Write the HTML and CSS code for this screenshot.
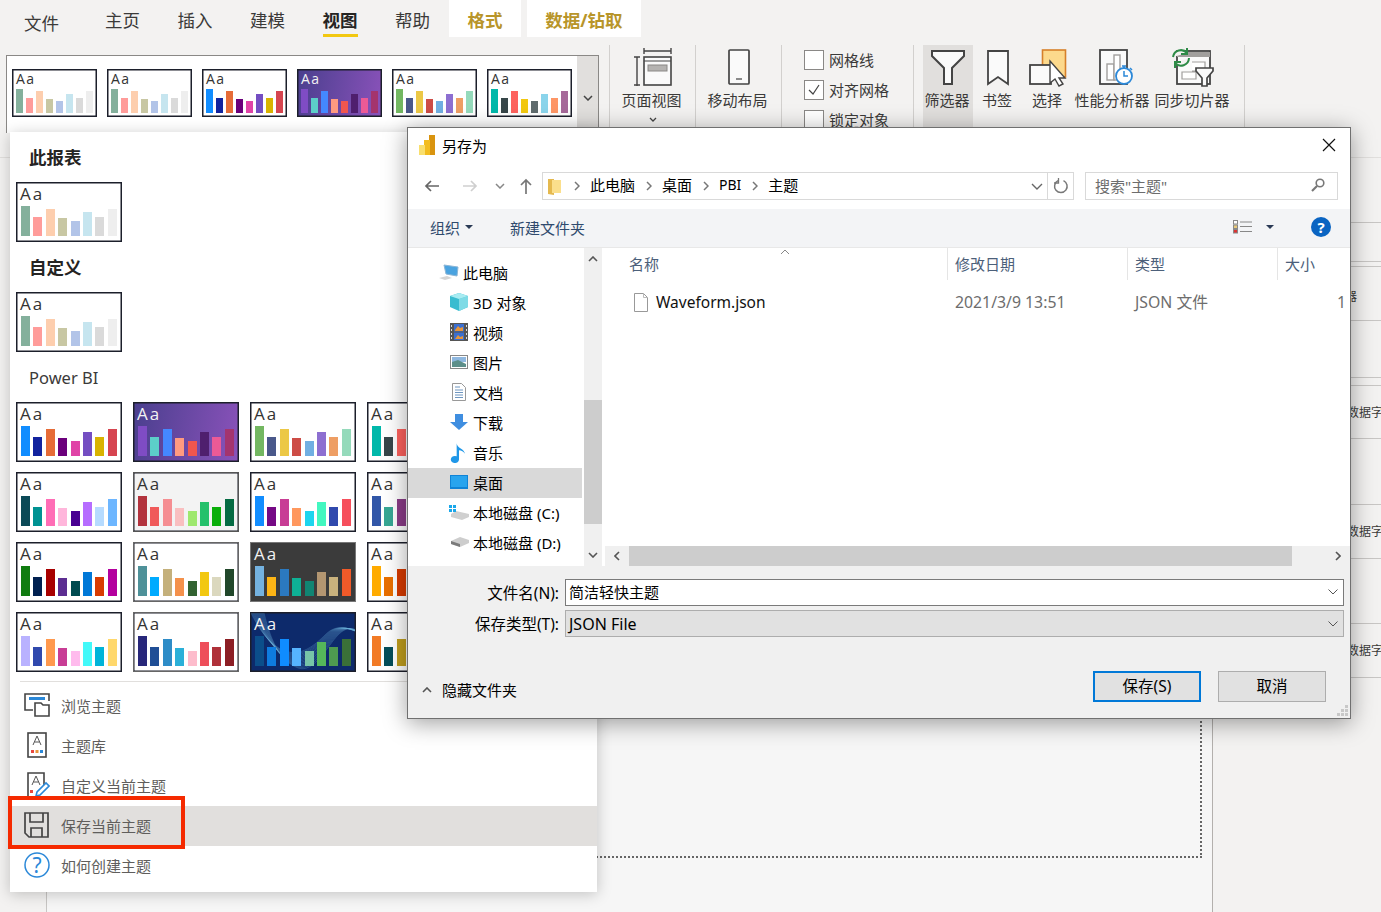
FILE: index.html
```html
<!DOCTYPE html>
<html lang="zh-CN">
<head>
    <meta charset="UTF-8">
    <title>Power BI 另存为主题</title>
    <link rel="stylesheet" href="styles.css">
</head>
<body>
    <!-- Ribbon -->
    <header class="ribbon">
        <nav class="tabs">
            <span class="tab tab-file">文件</span>
            <span class="tab">主页</span>
            <span class="tab">插入</span>
            <span class="tab">建模</span>
            <span class="tab tab-active">视图</span>
            <span class="tab">帮助</span>
            <span class="tab-context tab-format">格式</span>
            <span class="tab-context tab-data">数据/钻取</span>
        </nav>

        <div class="tools">
            <div class="gallery">
                <div id="ribbonThemes" class="gallery-items"></div>
                <div class="gallery-more">
                    <svg width="10" height="6" viewBox="0 0 10 6"><path d="M1 1l4 4 4-4" fill="none" stroke="#444" stroke-width="1.5"/></svg>
                </div>
            </div>

            <div class="group group-page">
                <button class="tool">
                    <svg class="tool-icon" width="38" height="38" viewBox="0 0 38 38">
                        <path d="M10 3h27M10 0v6M37 0v6M3 9v29M0 9h6M0 37h6" fill="none" stroke="#444" stroke-width="1.4"/>
                        <rect x="10" y="9" width="27" height="28" fill="#fafafa" stroke="#444" stroke-width="1.6"/>
                        <path d="M10 13h27" stroke="#444"/>
                        <rect x="14" y="17" width="19" height="6" fill="#b5b3b1" stroke="#8a8886"/>
                    </svg>
                    <span class="tool-label">页面视图</span>
                    <svg class="tool-caret" width="8" height="5" viewBox="0 0 8 5"><path d="M1 1l3 3 3-3" fill="none" stroke="#444" stroke-width="1.3"/></svg>
                </button>
            </div>

            <div class="group group-mobile">
                <button class="tool">
                    <svg class="tool-icon" width="22" height="38" viewBox="0 0 22 38">
                        <rect x="1" y="2" width="20" height="34" rx="1" fill="#fafafa" stroke="#444" stroke-width="1.7"/>
                        <path d="M8 31h6" stroke="#666" stroke-width="1.5"/>
                    </svg>
                    <span class="tool-label">移动布局</span>
                </button>
            </div>

            <div class="group group-checks">
                <label class="check"><span class="check-box"></span>网格线</label>
                <label class="check"><span class="check-box"><svg width="18" height="18" viewBox="0 0 18 18"><path d="M4 9l4 4 6-9" fill="none" stroke="#444" stroke-width="1.2"/></svg></span>对齐网格</label>
                <label class="check"><span class="check-box"></span>锁定对象</label>
            </div>

            <div class="group group-panes">
                <button class="tool tool-on pane-narrow">
                    <svg class="tool-icon" width="34" height="38" viewBox="0 0 34 38">
                        <path d="M1 3h32v5L21 20v16h-8V20L1 8z" fill="#fafafa" stroke="#444" stroke-width="2"/>
                    </svg>
                    <span class="tool-label">筛选器</span>
                </button>
                <button class="tool pane-narrow">
                    <svg class="tool-icon" width="22" height="38" viewBox="0 0 22 38">
                        <path d="M1 3h20v33l-10-7-10 7z" fill="#fafafa" stroke="#444" stroke-width="1.8"/>
                    </svg>
                    <span class="tool-label">书签</span>
                </button>
                <button class="tool pane-narrow">
                    <svg class="tool-icon" width="38" height="38" viewBox="0 0 38 38">
                        <rect x="13.5" y="2" width="23" height="27" fill="#fcd98c" stroke="#d6802a" stroke-width="1.6"/>
                        <rect x="1" y="17" width="21" height="19" fill="#fafafa" stroke="#444" stroke-width="1.8"/>
                        <path d="M21 13l15 17h-6l4 6-4 2-4-7-5 4z" fill="#fff" stroke="#444" stroke-width="1.4"/>
                    </svg>
                    <span class="tool-label">选择</span>
                </button>
                <button class="tool pane-wide">
                    <svg class="tool-icon tool-icon-perf" width="36" height="40" viewBox="0 0 36 40">
                        <rect x="1" y="3" width="27" height="34" fill="#fafafa" stroke="#444" stroke-width="1.8"/>
                        <rect x="8" y="17" width="7" height="16" fill="#fff" stroke="#a19f9d" stroke-width="1.4"/>
                        <rect x="15" y="8" width="6" height="25" fill="#fff" stroke="#a19f9d" stroke-width="1.4"/>
                        <circle cx="25" cy="29" r="8" fill="#fff" stroke="#2b88d8" stroke-width="1.8"/>
                        <path d="M25 24v5h4M23 19h4M25 19v2M31 21l2 2" fill="none" stroke="#2b88d8" stroke-width="1.5"/>
                    </svg>
                    <span class="tool-label">性能分析器</span>
                </button>
                <button class="tool pane-wide">
                    <svg class="tool-icon" width="42" height="40" viewBox="0 0 42 40">
                        <rect x="5" y="4" width="33" height="33" fill="#fafafa" stroke="#444" stroke-width="1.8"/>
                        <rect x="5" y="5" width="33" height="5" fill="#a19f9d"/>
                        <path d="M20 15h13v9H20M10 25h14v7H10z" fill="#fff" stroke="#a19f9d" stroke-width="1.2"/>
                        <path d="M1 10a8 8 0 0 1 14-4M17 11a8 8 0 0 1-14 5" fill="#f3f2f1" stroke="#2e8b47" stroke-width="2"/>
                        <path d="M15 1v6h-6M3 21v-6h6" fill="none" stroke="#2e8b47" stroke-width="2"/>
                        <path d="M24 21h17v3l-6 7v8h-5v-8l-6-7z" fill="#fafafa" stroke="#444" stroke-width="1.7"/>
                    </svg>
                    <span class="tool-label">同步切片器</span>
                </button>
            </div>
        </div>
    </header>

    <!-- Report canvas behind the menus -->
    <main class="workspace">
        <div class="rail"></div>
        <div class="canvas"><div class="page-frame"></div></div>
        <aside class="panel">
            <div class="panel-row panel-h65"></div>
            <div class="panel-row panel-h39"></div>
            <div class="panel-row panel-h5"></div>
            <div class="panel-row panel-h54 panel-slicer">器</div>
            <div class="panel-row panel-h57"></div>
            <div class="panel-row panel-h8"></div>
            <div class="panel-row panel-h53 panel-field">数据字</div>
            <div class="panel-row panel-h66"></div>
            <div class="panel-row panel-h54 panel-field">数据字</div>
            <div class="panel-row panel-h65"></div>
            <div class="panel-row panel-h54 panel-field">数据字</div>
        </aside>
    </main>

    <!-- Themes dropdown -->
    <div class="theme-menu">
        <h2 class="menu-title menu-title-bold">此报表</h2>
        <div id="reportTheme" class="theme-grid"></div>
        <h2 class="menu-title menu-title-bold">自定义</h2>
        <div id="customTheme" class="theme-grid"></div>
        <h2 class="menu-title menu-title-latin">Power BI</h2>
        <div id="builtinThemes" class="theme-grid"></div>

        <ul class="menu-list">
            <li class="menu-item">
                <svg class="menu-icon" width="26" height="24" viewBox="0 0 26 24">
                    <path d="M9 17H1V1h24v7" fill="none" stroke="#444" stroke-width="1.6"/>
                    <rect x="5" y="4" width="16" height="3" fill="#2b88d8"/>
                    <path d="M11 10h6l2 2h6v11H11z" fill="#fff" stroke="#444" stroke-width="1.6"/>
                </svg>
                浏览主题
            </li>
            <li class="menu-item">
                <svg class="menu-icon" width="26" height="26" viewBox="0 0 26 26">
                    <rect x="4" y="1" width="18" height="24" fill="#fff" stroke="#444" stroke-width="1.6"/>
                    <path d="M9 13l4-9 4 9M10.5 10h5" fill="none" stroke="#555" stroke-width="1"/>
                    <rect x="7" y="18" width="3" height="3" fill="#e8483f"/>
                    <rect x="11.5" y="18" width="3" height="3" fill="#e8943a"/>
                    <rect x="16" y="18" width="3" height="3" fill="#2b88d8"/>
                </svg>
                主题库
            </li>
            <li class="menu-item">
                <svg class="menu-icon" width="26" height="26" viewBox="0 0 26 26">
                    <path d="M14 25H4V1h16v12" fill="#fff" stroke="#444" stroke-width="1.6"/>
                    <path d="M8 13l4-9 4 9M9.5 10h5" fill="none" stroke="#555" stroke-width="1"/>
                    <rect x="6" y="18" width="3" height="3" fill="#e8483f"/>
                    <path d="M12 24l1-4 9-9 3 3-9 9z" fill="#fff" stroke="#2b88d8" stroke-width="1.6"/>
                </svg>
                自定义当前主题
            </li>
            <li class="menu-item menu-item-on">
                <svg class="menu-icon" width="26" height="26" viewBox="0 0 26 26">
                    <path d="M1 1h23v24H5l-4-4z" fill="none" stroke="#444" stroke-width="1.7"/>
                    <path d="M6 1v9h13V1M7 25v-9h11v9" fill="none" stroke="#444" stroke-width="1.7"/>
                </svg>
                保存当前主题
            </li>
            <li class="menu-item">
                <svg class="menu-icon" width="26" height="26" viewBox="0 0 26 26">
                    <circle cx="13" cy="13" r="12" fill="#fff" stroke="#2b88d8" stroke-width="1.5"/>
                    <text class="menu-help" x="13" y="20.500" text-anchor="middle">?</text>
                </svg>
                如何创建主题
            </li>
        </ul>
    </div>

    <div class="callout"></div>

    <!-- Save as dialog -->
    <section class="dialog">
        <div class="dlg-title">
            <svg width="16" height="20" viewBox="0 0 16 20">
                <rect x="10" y="0" width="6" height="20" fill="#d9940f"/>
                <rect x="5" y="5" width="6" height="15" fill="#f2bc1f"/>
                <rect x="0" y="10" width="6" height="10" fill="#f9df6e"/>
            </svg>
            <span>另存为</span>
            <svg class="dlg-close" width="14" height="14" viewBox="0 0 14 14"><path d="M1 1l12 12M13 1L1 13" stroke="#111" stroke-width="1.2"/></svg>
        </div>

        <div class="dlg-address">
            <span class="nav-btn nav-back"><svg width="16" height="12" viewBox="0 0 16 12"><path d="M15 6H2M7 1L2 6l5 5" fill="none" stroke="#666" stroke-width="1.7"/></svg></span>
            <span class="nav-btn nav-fwd"><svg width="16" height="12" viewBox="0 0 16 12"><path d="M1 6h13M9 1l5 5-5 5" fill="none" stroke="#cfcfcf" stroke-width="1.7"/></svg></span>
            <span class="nav-btn nav-hist"><svg width="10" height="6" viewBox="0 0 10 6"><path d="M1 1l4 4 4-4" fill="none" stroke="#888" stroke-width="1.5"/></svg></span>
            <span class="nav-btn nav-up"><svg width="12" height="16" viewBox="0 0 12 16"><path d="M6 16V2M1 7l5-5 5 5" fill="none" stroke="#777" stroke-width="1.7"/></svg></span>

            <div class="crumbs">
                <svg class="crumb-folder" width="13" height="17" viewBox="0 0 13 17">
                    <path d="M0 1h6v16l-6-1z" fill="#e5b94e"/>
                    <path d="M4 2h9v13H4z" fill="#fbdf8c"/>
                </svg>
                <span class="crumb-sep"><svg width="6" height="10" viewBox="0 0 6 10"><path d="M1 1l4 4-4 4" fill="none" stroke="#777" stroke-width="1.5"/></svg></span>
                <span class="crumb-text">此电脑</span>
                <span class="crumb-sep"><svg width="6" height="10" viewBox="0 0 6 10"><path d="M1 1l4 4-4 4" fill="none" stroke="#777" stroke-width="1.5"/></svg></span>
                <span class="crumb-text">桌面</span>
                <span class="crumb-sep"><svg width="6" height="10" viewBox="0 0 6 10"><path d="M1 1l4 4-4 4" fill="none" stroke="#777" stroke-width="1.5"/></svg></span>
                <span class="crumb-text crumb-latin">PBI</span>
                <span class="crumb-sep"><svg width="6" height="10" viewBox="0 0 6 10"><path d="M1 1l4 4-4 4" fill="none" stroke="#777" stroke-width="1.5"/></svg></span>
                <span class="crumb-text">主题</span>
                <svg class="crumb-drop" width="12" height="7" viewBox="0 0 12 7"><path d="M1 1l5 5 5-5" fill="none" stroke="#666" stroke-width="1.4"/></svg>
                <span class="crumb-refresh">
                    <svg width="16" height="16" viewBox="0 0 16 16"><path d="M10.5 2.6A6.3 6.3 0 1 1 5 2.7" fill="none" stroke="#777" stroke-width="1.5"/><path d="M5.5 0v5H1" fill="none" stroke="#777" stroke-width="1.3"/></svg>
                </span>
            </div>

            <div class="search">
                <span>搜索"主题"</span>
                <svg width="14" height="14" viewBox="0 0 14 14"><circle cx="9" cy="5" r="3.8" fill="none" stroke="#777" stroke-width="1.6"/><path d="M6 8l-5 5" stroke="#777" stroke-width="2.2"/></svg>
            </div>
        </div>

        <div class="dlg-toolbar">
            <span class="toolbar-btn">组织<i class="caret"></i></span>
            <span class="toolbar-btn toolbar-new">新建文件夹</span>
            <svg class="toolbar-view" width="19" height="14" viewBox="0 0 19 14">
                <rect x=".5" y=".5" width="4" height="3.5" fill="#fff" stroke="#888"/>
                <rect x=".5" y="5" width="4" height="3.5" fill="#e8c97a" stroke="#888"/>
                <rect x=".5" y="9.5" width="4" height="3.5" fill="#d33" stroke="#888"/>
                <path d="M7 2h12M7 6.500h12M7 11.500h12" stroke="#888"/>
            </svg>
            <i class="caret toolbar-caret"></i>
            <span class="help-dot">?</span>
        </div>

        <div class="dlg-body">
            <ul class="tree">
                <li class="tree-item tree-root">
                    <svg width="20" height="16" viewBox="0 0 20 16"><path d="M5 1l14 2-1 9-11-2z" fill="#4aa3e0" stroke="#8db6d6"/><path d="M0 14l8-2 5 2-7 2z" fill="#d5d5d5"/></svg>
                    此电脑
                </li>
                <li class="tree-item">
                    <svg width="18" height="18" viewBox="0 0 18 18"><path d="M9 0l9 3v11l-9 4-9-4V3z" fill="#39bcd0"/><path d="M9 6l9-3v11l-9 4z" fill="#7fdbe6"/><path d="M0 3l9-3 9 3-9 3z" fill="#a8ecf2"/></svg>
                    3D 对象
                </li>
                <li class="tree-item">
                    <svg width="18" height="18" viewBox="0 0 18 18"><rect width="18" height="18" fill="#555"/><rect x="4" y="1" width="10" height="7.500" fill="#3b6fd0"/><rect x="4" y="9.500" width="10" height="7.500" fill="#3b6fd0"/><path d="M5 7l3-4 2 2 3-1v4H5zM5 16l3-4 2 2 3-1v3z" fill="#e8963a"/><path d="M1.500 2v14M16.500 2v14" stroke="#ddd" stroke-dasharray="2 2"/></svg>
                    视频
                </li>
                <li class="tree-item">
                    <svg width="18" height="14" viewBox="0 0 18 14"><rect x=".5" y=".5" width="17" height="13" fill="#fff" stroke="#888"/><rect x="2" y="2" width="14" height="5" fill="#8fb8e0"/><path d="M2 7l6-2 8 4v3H2z" fill="#5d8f8a"/></svg>
                    图片
                </li>
                <li class="tree-item">
                    <svg width="14" height="18" viewBox="0 0 14 18"><path d="M.5.5h9l4 4v13H.500z" fill="#fff" stroke="#999"/><path d="M3 4h5M3 7h8M3 9.500h8M3 12h8M3 14.500h8" stroke="#6f96c0"/></svg>
                    文档
                </li>
                <li class="tree-item">
                    <svg width="18" height="16" viewBox="0 0 18 16"><path d="M5 0h8v8h5l-9 8-9-8h5z" fill="#3f8ee0"/></svg>
                    下载
                </li>
                <li class="tree-item">
                    <svg width="16" height="21" viewBox="0 0 14 18"><path d="M5 1c0 4 7 5 7 9-1-2-3-3-5-3v8a3.500 3 0 1 1-2-2.700z" fill="#1f97e8"/></svg>
                    音乐
                </li>
                <li class="tree-item tree-item-on">
                    <svg width="18" height="14" viewBox="0 0 18 14"><rect width="18" height="14" fill="#1083d6"/><rect x="1" y="1" width="16" height="11" fill="#28a4ee"/></svg>
                    桌面
                </li>
                <li class="tree-item">
                    <svg width="20" height="16" viewBox="0 0 20 16"><path d="M2 10l5-3 13 3v3l-7 3-11-3z" fill="#d0d0d0"/><path d="M0 1h3v3H0zM4 1h3v3H4zM0 5h3v3H0zM4 5h3v3H4z" fill="#19a7ea"/></svg>
                    本地磁盘 (C:)
                </li>
                <li class="tree-item">
                    <svg width="20" height="12" viewBox="0 0 20 12"><path d="M2 5l9-4 9 3v3l-9 4-9-3z" fill="#cdcdcd"/><path d="M2 5l9 3v3l-9-3z" fill="#7a7a7a"/></svg>
                    本地磁盘 (D:)
                </li>
            </ul>

            <div class="vscroll">
                <span class="scroll-btn"><svg width="10" height="6" viewBox="0 0 10 6"><path d="M1 5l4-4 4 4" fill="none" stroke="#555" stroke-width="1.6"/></svg></span>
                <span class="vscroll-thumb"></span>
                <span class="scroll-btn vscroll-down"><svg width="10" height="6" viewBox="0 0 10 6"><path d="M1 1l4 4 4-4" fill="none" stroke="#555" stroke-width="1.6"/></svg></span>
            </div>

            <div class="files">
                <div class="file-head file-cols">
                    <span class="col-name">名称
                        <svg class="sort-mark" width="10" height="6" viewBox="0 0 10 6"><path d="M1 5l4-4 4 4" fill="none" stroke="#888"/></svg>
                    </span>
                    <span class="col-line">修改日期</span>
                    <span class="col-line">类型</span>
                    <span class="col-line">大小</span>
                </div>
                <div class="file-row file-cols">
                    <span class="file-name">
                        <svg width="14" height="19" viewBox="0 0 14 19"><path d="M.5.500h9l4 4v14H.500z" fill="#fff" stroke="#999"/><path d="M9.500.500v4h4" fill="none" stroke="#bbb"/></svg>
                        Waveform.json
                    </span>
                    <span class="file-meta">2021/3/9 13:51</span>
                    <span class="file-meta">JSON 文件</span>
                    <span class="file-meta file-size">1</span>
                </div>
                <div class="hscroll">
                    <span class="scroll-side"><svg width="6" height="10" viewBox="0 0 6 10"><path d="M5 1L1 5l4 4" fill="none" stroke="#555" stroke-width="1.6"/></svg></span>
                    <span class="hscroll-thumb"></span>
                    <span class="scroll-side scroll-right"><svg width="6" height="10" viewBox="0 0 6 10"><path d="M1 1l4 4-4 4" fill="none" stroke="#555" stroke-width="1.6"/></svg></span>
                </div>
            </div>
        </div>

        <div class="dlg-foot">
            <div class="field">
                <span class="field-label">文件名(N):</span>
                <div class="field-box">简洁轻快主题
                    <svg width="10" height="6" viewBox="0 0 10 6"><path d="M.5.500L5 5 9.500.500" fill="none" stroke="#555"/></svg>
                </div>
            </div>
            <div class="field">
                <span class="field-label">保存类型(T):</span>
                <div class="field-box field-box-select">JSON File
                    <svg width="10" height="6" viewBox="0 0 10 6"><path d="M.5.500L5 5 9.500.500" fill="none" stroke="#555"/></svg>
                </div>
            </div>
            <div class="foot-actions">
                <span class="hide-folders">
                    <svg width="10" height="6" viewBox="0 0 10 6"><path d="M1 5l4-4 4 4" fill="none" stroke="#555" stroke-width="1.6"/></svg>
                    隐藏文件夹
                </span>
                <button class="dlg-btn dlg-btn-default">保存(S)</button>
                <button class="dlg-btn">取消</button>
            </div>
            <svg class="grip" width="12" height="12" viewBox="0 0 12 12"><path d="M9 0h3v3H9zM5 4h3v3H5zM9 4h3v3H9zM1 8h3v3H1zM5 8h3v3H5zM9 8h3v3H9z" fill="#c8c8c8"/></svg>
        </div>
    </section>

    <script src="themes.js"></script>
</body>
</html>
```

FILE: styles.css
```css
* {
    box-sizing: border-box;
}

body {
    margin: 0;
    height: 912px;
    overflow: hidden;
    position: relative;
    font-family: "Noto Sans", "Noto Sans CJK SC", sans-serif;
    font-size: 15px;
    color: #252423;
    background-color: #f3f2f1;
}

button {
    font: inherit;
    color: inherit;
    border: none;
    background: none;
    padding: 0;
}

ul {
    list-style: none;
    margin: 0;
    padding: 0;
}

/* Ribbon */
.ribbon {
    height: 158px;
    border-bottom: 1px solid #e1dfdd;
}

.tabs {
    display: flex;
    height: 37px;
    padding-left: 24px;
}

.tab {
    position: relative;
    margin-right: 37.5px;
    font-size: 17.5px;
    line-height: 40px;
    color: #3b3a39;
}

.tab-file {
    margin-right: 46px;
    line-height: 46px;
}

.tab-active {
    font-weight: 700;
    color: #252423;
    border-bottom: 3px solid #f2c811;
}

.tab-context {
    height: 37px;
    background-color: #fff;
    font-size: 17.5px;
    font-weight: 700;
    line-height: 40px;
    text-align: center;
    color: #b8952a;
}

.tab-format {
    width: 72px;
    margin-left: -18.5px;
    margin-right: 6px;
}

.tab-data {
    width: 114px;
}

.tools {
    display: flex;
    align-items: flex-start;
    padding-left: 6px;
}

.gallery {
    display: flex;
    width: 593px;
    height: 78px;
    margin-top: 18px;
    margin-right: 10px;
    border: 1px solid #8a8886;
    border-bottom: none;
    background-color: #fff;
}

.gallery-items {
    display: flex;
    gap: 10px;
    flex: 1;
    padding: 13px 0 0 5px;
}

.gallery-more {
    display: flex;
    align-items: center;
    justify-content: center;
    width: 21px;
    padding-top: 6px;
    background-color: #e1dfdd;
}

.group {
    height: 83px;
    margin-top: 8px;
    border-left: 1px solid #d2d0ce;
}

.group-page,
.group-mobile {
    width: 86px;
}

.group-checks {
    display: flex;
    flex-direction: column;
    gap: 8px;
    width: 132px;
    padding: 5px 0 0 22px;
}

.group-panes {
    display: flex;
    width: 332px;
    padding-left: 9px;
    border-right: 1px solid #d2d0ce;
}

.tool {
    display: flex;
    flex-direction: column;
    align-items: center;
    height: 83px;
    width: 100%;
    padding-top: 2px;
}

.tool-icon {
    flex: none;
    height: 40px;
}

.tool-icon-perf {
    margin-left: 8px;
}

.tool-label {
    margin-top: 3px;
    margin-right: 2px;
    line-height: 20px;
    white-space: nowrap;
    color: #3b3a39;
}

.tool-caret {
    margin-top: 7px;
}

.tool-on {
    background-color: #e1dfdd;
}

.pane-narrow {
    width: 50px;
}

.pane-wide {
    width: 80px;
}

.check {
    display: flex;
    align-items: center;
    gap: 5px;
    height: 22px;
    padding-bottom: 4px;
    color: #3b3a39;
}

.check-box {
    display: block;
    width: 20px;
    height: 20px;
    margin-bottom: -2px;
    border: 1px solid #8a8886;
    background-color: #fff;
}

.check-box svg {
    display: block;
}

/* Theme thumbnails */
.thumb {
    position: relative;
    display: flex;
    flex-direction: column;
    flex: none;
    width: 106px;
    height: 60px;
    padding: 0 4px 5px 4px;
    border: 1px solid #1c1f2b;
    box-shadow: inset 0 0 0 0.5px #1c1f2b;
    background-color: #fff;
    overflow: hidden;
}

.thumb-aa {
    position: relative;
    flex: 1;
    margin-left: -1px;
    font-family: "Open Sans", sans-serif;
    font-size: 17px;
    line-height: 22px;
    letter-spacing: 2px;
    color: #333;
}

.thumb-bars {
    position: relative;
    display: flex;
    align-items: flex-end;
    gap: 3.4px;
    height: 30px;
}

.thumb-bars span {
    flex: none;
    width: 9px;
}

.thumb-sm {
    width: 85px;
    height: 48px;
    padding: 0 3px 3px 3px;
}

.thumb-sm .thumb-aa {
    margin-left: 0;
    font-size: 14px;
    line-height: 18px;
    letter-spacing: 1.5px;
}

.thumb-sm .thumb-bars {
    height: 24px;
    gap: 2.8px;
}

.thumb-sm .thumb-bars span {
    width: 7.2px;
}

.thumb-purple {
    background: linear-gradient(100deg, #4a3f8e, #8a52ba);
}

.thumb-light {
    background-color: #f3f3f3;
    border-color: #555;
}

.thumb-gray {
    border-color: #666;
}

.thumb-dark {
    background-color: #3b3b3b;
    border-color: #777;
    box-shadow: none;
}

.thumb-navy {
    background-color: #0d2a6b;
}

.thumb-purple .thumb-aa,
.thumb-dark .thumb-aa,
.thumb-navy .thumb-aa {
    color: #f2f2f2;
}

.thumb-wave {
    position: absolute;
    left: 0;
    top: 0;
}

/* Report canvas */
.workspace {
    display: flex;
    height: 754px;
}

.rail {
    width: 47px;
    border-right: 1px solid #c8c6c4;
    background-color: #f3f2f1;
}

.canvas {
    flex: 1;
    padding: 60px 10px 54px 30px;
    background-color: #f6f6f6;
}

.page-frame {
    height: 100%;
    border: 2px dotted #666;
}

.panel {
    width: 169px;
    border-left: 1px solid #b3b0ad;
    background-color: #f3f2f1;
    overflow: hidden;
}

.panel-row {
    display: flex;
    align-items: center;
    border-bottom: 1px solid #c8c6c4;
    white-space: nowrap;
    font-size: 12px;
    color: #3b3a39;
}

.panel-h5 { height: 5px; }
.panel-h8 { height: 8px; }
.panel-h39 { height: 39px; }
.panel-h53 { height: 53px; }
.panel-h54 { height: 54px; }
.panel-h57 { height: 57px; }
.panel-h65 { height: 65px; }
.panel-h66 { height: 66px; }

.panel-slicer {
    padding-top: 5px;
    padding-left: 132px;
}

.panel-field {
    padding-bottom: 1px;
    padding-left: 134px;
}

/* Themes dropdown */
.theme-menu {
    position: absolute;
    left: 10px;
    top: 132px;
    width: 587px;
    height: 760px;
    padding: 0 6px;
    background-color: #fff;
    box-shadow: 0 2px 14px rgba(0, 0, 0, 0.22);
}

.menu-title {
    height: 50px;
    margin: 0;
    padding-left: 13px;
    font-size: 17.5px;
    font-weight: 400;
    line-height: 52px;
    color: #3b3a39;
}

.menu-title-bold {
    font-weight: 700;
    line-height: 50px;
    color: #252423;
}

.menu-title-latin {
    font-size: 16.5px;
}

.theme-grid {
    display: grid;
    grid-template-columns: repeat(4, 106px);
    gap: 10px 11px;
}

.menu-list {
    margin: 9px -6px 0 -6px;
    padding-top: 5px;
    position: relative;
}

.menu-list::before {
    content: "";
    position: absolute;
    left: 10px;
    right: 10px;
    top: 0;
    border-top: 1px solid #e1dfdd;
}

.menu-item {
    display: flex;
    align-items: center;
    height: 40px;
    padding-left: 14px;
    padding-bottom: 2px;
    color: #605e5c;
}

.menu-item-on {
    background-color: #e1dfdd;
}

.menu-icon {
    flex: none;
    margin-right: 11px;
}

.menu-help {
    font-size: 21px;
    fill: #2b88d8;
}

/* Red highlight drawn on the screenshot */
.callout {
    position: absolute;
    left: 8px;
    top: 796px;
    width: 177px;
    height: 53px;
    border: 4px solid #f52a00;
}

/* Save as dialog */
.dialog {
    position: absolute;
    left: 407px;
    top: 127px;
    width: 944px;
    height: 592px;
    display: flex;
    flex-direction: column;
    border: 1px solid #707070;
    background-color: #fff;
    box-shadow: 0 4px 22px rgba(0, 0, 0, 0.38);
    color: #000;
}

.dlg-title {
    display: flex;
    align-items: center;
    gap: 7px;
    height: 36px;
    padding: 0 14px 2px 11px;
    font-size: 15px;
}

.dlg-close {
    margin-left: auto;
}

.dlg-address {
    display: flex;
    align-items: center;
    height: 28px;
    margin-top: 8px;
}

.nav-btn {
    display: flex;
    align-items: center;
    justify-content: center;
    flex: none;
}

.nav-back { width: 48px; }
.nav-fwd { width: 30px; margin-left: -1px; }
.nav-hist { width: 30px; }
.nav-up { width: 22px; margin-right: 5px; }

.crumbs {
    display: flex;
    align-items: center;
    width: 532px;
    height: 28px;
    padding-left: 5px;
    border: 1px solid #d9d9d9;
}

.crumb-text {
    margin-top: -3px;
}

.crumb-latin {
    font-size: 14px;
}

.crumb-sep {
    display: flex;
    align-items: center;
    justify-content: center;
    width: 27px;
}

.crumb-folder {
    margin-right: 2px;
}

.crumb-drop {
    margin-left: auto;
    margin-right: 4px;
}

.crumb-refresh {
    display: flex;
    align-items: center;
    justify-content: center;
    width: 26px;
    height: 26px;
    border-left: 1px solid #d9d9d9;
}

.search {
    display: flex;
    align-items: center;
    justify-content: space-between;
    width: 253px;
    height: 28px;
    margin-left: 11px;
    padding: 0 12px 2px 9px;
    border: 1px solid #d9d9d9;
    font-size: 15px;
    color: #6d6d6d;
}

.dlg-toolbar {
    display: flex;
    align-items: center;
    height: 39px;
    margin-top: 9px;
    padding: 0 19px 2px 22px;
    border-bottom: 1px solid #e8e8e8;
    background-color: #f3f4f6;
    font-size: 15px;
    color: #2f4a6d;
}

.toolbar-btn {
    display: flex;
    align-items: center;
}

.toolbar-new {
    margin-left: 37px;
}

.caret {
    display: inline-block;
    width: 0;
    height: 0;
    margin-left: 5px;
    border-left: 4px solid transparent;
    border-right: 4px solid transparent;
    border-top: 4px solid #2a3a55;
}

.toolbar-view {
    margin-left: auto;
}

.toolbar-caret {
    margin-left: 14px;
    margin-right: 37px;
}

.help-dot {
    width: 20px;
    height: 20px;
    border-radius: 50%;
    background-color: #0a64c2;
    font-size: 15px;
    font-weight: 700;
    line-height: 20px;
    text-align: center;
    color: #fff;
}

.dlg-body {
    display: flex;
    height: 318px;
}

.tree {
    width: 174px;
    padding-top: 10px;
}

.tree-item {
    display: flex;
    align-items: center;
    height: 30px;
    padding-left: 41px;
    padding-bottom: 2px;
    white-space: nowrap;
    font-size: 15px;
}

.tree-item svg {
    flex: none;
    width: 20px;
    margin-right: 4px;
}

.tree-root {
    padding-left: 31px;
}

.tree-item-on {
    background-color: #d9d9d9;
}

.vscroll {
    display: flex;
    flex-direction: column;
    align-items: stretch;
    width: 18px;
    margin-left: 2px;
    background-color: #f0f0f0;
}

.scroll-btn {
    display: flex;
    align-items: center;
    justify-content: center;
    height: 22px;
}

.vscroll-thumb {
    height: 124px;
    margin-top: 130px;
    background-color: #cdcdcd;
}

.vscroll-down {
    margin-top: auto;
}

.files {
    position: relative;
    flex: 1;
    display: flex;
    flex-direction: column;
    margin-left: 3px;
    min-width: 0;
}

.file-cols {
    display: grid;
    grid-template-columns: 342px 180px 150px 1fr;
}

.file-head {
    height: 32px;
    line-height: 32px;
    color: #4c607a;
}

.col-name {
    position: relative;
    padding-left: 24px;
}

.col-line {
    padding-left: 7px;
    border-left: 1px solid #e5e5e5;
}

.sort-mark {
    position: absolute;
    left: 175px;
    top: 1px;
}

.file-row {
    align-items: center;
    height: 30px;
    margin-top: 7px;
}

.file-name {
    display: flex;
    align-items: center;
    gap: 8px;
    padding-left: 29px;
    font-size: 15.500px;
    color: #111;
}

.file-meta {
    padding-left: 8px;
    padding-bottom: 1px;
    font-size: 15.800px;
    color: #6d6d6d;
}

.file-size {
    padding-left: 60px;
}

.hscroll {
    display: flex;
    align-items: stretch;
    height: 20px;
    margin-top: auto;
    background-color: #f0f0f0;
}

.scroll-side {
    display: flex;
    align-items: center;
    justify-content: center;
    width: 24px;
}

.hscroll-thumb {
    width: 663px;
    background-color: #cdcdcd;
}

.scroll-right {
    margin-left: auto;
}

.dlg-foot {
    position: relative;
    flex: 1;
    padding-top: 13px;
    background-color: #f0f0f0;
}

.field {
    display: flex;
    align-items: center;
    gap: 6px;
    margin-bottom: 4px;
}

.field-label {
    width: 151px;
    font-size: 15.500px;
    text-align: right;
}

.field-box {
    display: flex;
    align-items: center;
    justify-content: space-between;
    width: 779px;
    height: 27px;
    padding: 0 5px 2px 3px;
    border: 1px solid #7a7a7a;
    background-color: #fff;
}

.field-box-select {
    padding-bottom: 0;
    border-color: #adadad;
    background-color: #e1e1e1;
    font-size: 16px;
}

.foot-actions {
    display: flex;
    align-items: center;
    gap: 17px;
    height: 31px;
    margin-top: 34px;
    padding: 0 24px 0 14px;
}

.hide-folders {
    display: flex;
    align-items: center;
    gap: 10px;
    margin-right: auto;
    padding-top: 6px;
}

.dlg-btn {
    width: 108px;
    height: 31px;
    padding-bottom: 3px;
    border: 1px solid #adadad;
    background-color: #e1e1e1;
    font-size: 15.500px;
    color: #000;
}

.dlg-btn-default {
    border: 2px solid #0078d7;
}

.grip {
    position: absolute;
    right: 2px;
    bottom: 1px;
}
```

FILE: themes.js
```js
// Bar heights are the same in every thumbnail
const barHeights = [30, 19, 27, 18, 15, 24, 19, 27];

const sage = ['#84b09c', '#ff9c9a', '#fdceae', '#c8c7a3', '#b2c4e8', '#c6e5ef', '#dadada', '#eeeeee'];
const standard = ['#118dff', '#12239e', '#e66c37', '#6b007b', '#e044a7', '#744ec2', '#d9b300', '#d64550'];
const purple = ['#7f4cc4', '#5ccfc9', '#4488ff', '#ff9a80', '#f0564e', '#4f1f6e', '#ec5a96', '#a4346e'];
const meadow = ['#73b761', '#4a588a', '#ecc846', '#cd4c46', '#71afe2', '#8d6fd1', '#ee9e64', '#95dabb'];
const classic = ['#01b8aa', '#374649', '#fd625e', '#f2c80f', '#5f6b6d', '#8ad4eb', '#fe9666', '#a66999'];

const builtin = [
    { colors: standard },
    { colors: purple, cls: 'thumb-purple' },
    { colors: meadow },
    { colors: classic },
    { colors: ['#0b4a57', '#009292', '#ff6db6', '#ffb6db', '#490092', '#b66dff', '#b6dbff', '#6db6ff'] },
    { colors: ['#b2333d', '#f05a5a', '#f58e92', '#f9bfc0', '#9ee86e', '#25c16b', '#0aae0a', '#056b43'], cls: 'thumb-light' },
    { colors: ['#118dff', '#750985', '#c83d95', '#ff985e', '#1dd5ee', '#42f7c0', '#3049ad', '#f64f5c'] },
    { colors: ['#3257a8', '#37a794', '#8b3d88', '#dd6b7f', '#6b91c9', '#f5c869', '#77c4a8', '#dea6cf'] },
    { colors: ['#107c10', '#002050', '#a80000', '#5c2d91', '#004b50', '#0078d7', '#d83b01', '#b4009e'] },
    { colors: ['#4e9199', '#00abff', '#c4b07b', '#f4914b', '#336331', '#f2c811', '#dbd8be', '#21472a'], cls: 'thumb-gray' },
    { colors: ['#74b2e0', '#fdb515', '#2b79bf', '#0eb195', '#108573', '#b39671', '#c9b27d', '#f15a29'], cls: 'thumb-dark' },
    { colors: ['#ffab00', '#e97000', '#d83b01', '#a4262c', '#ffc83d', '#e3008c', '#8764b8', '#2b88d8'] },
    { colors: ['#b9b2ff', '#3049ad', '#ff994e', '#c83d95', '#ffbbed', '#42f9f9', '#00b4d9', '#ffd86c'] },
    { colors: ['#28277a', '#1f4e96', '#2e8cc7', '#2bb0d8', '#fdbccc', '#ee4e5a', '#af3139', '#8c1e24'], cls: 'thumb-gray' },
    { colors: ['#0b4e8a', '#0e7ce0', '#0f8cff', '#56b4ff', '#77c4a8', '#55b75a', '#4e9a50', '#3a7038'], cls: 'thumb-navy', wave: true },
    { colors: ['#f27b26', '#054e5a', '#c09e1e', '#8c2f39', '#3a7ca5', '#7ea16b', '#d9b300', '#e66c37'] }
];

// Mesh of thin lines on the navy theme
function waveSvg() {
    let paths = '';
    for (let i = 0; i < 14; i++) {
        const y = i * 1.3;
        paths += `<path d="M${i} 0c8 ${16 + y} 18 ${32 + y} 34 ${38 + y}s30 ${-6 - y} 40 ${-16 - y} 18 -8 32 ${-4 + y / 2}"/>`;
    }
    return '<svg class="thumb-wave" width="106" height="60" viewBox="0 0 106 60" fill="none" stroke="#6fb4dc" stroke-opacity="0.55" stroke-width="0.5">' + paths + '</svg>';
}

function makeThumb(theme, small) {
    const thumb = document.createElement('div');
    thumb.className = 'thumb' + (small ? ' thumb-sm' : '') + (theme.cls ? ' ' + theme.cls : '');
    if (theme.wave) {
        thumb.innerHTML = waveSvg();
    }

    const label = document.createElement('div');
    label.className = 'thumb-aa';
    label.textContent = 'Aa';
    thumb.appendChild(label);

    const bars = document.createElement('div');
    bars.className = 'thumb-bars';
    theme.colors.forEach(function(color, i) {
        const bar = document.createElement('span');
        bar.style.height = (barHeights[i] / 30 * 100) + '%';
        bar.style.backgroundColor = color;
        bars.appendChild(bar);
    });
    thumb.appendChild(bars);
    return thumb;
}

function fill(id, themes, small) {
    const box = document.getElementById(id);
    themes.forEach(function(theme) {
        box.appendChild(makeThumb(theme, small));
    });
}

fill('ribbonThemes', [
    { colors: sage },
    { colors: sage },
    { colors: standard },
    { colors: purple, cls: 'thumb-purple' },
    { colors: meadow },
    { colors: classic }
], true);
fill('reportTheme', [{ colors: sage }]);
fill('customTheme', [{ colors: sage }]);
fill('builtinThemes', builtin);
```
